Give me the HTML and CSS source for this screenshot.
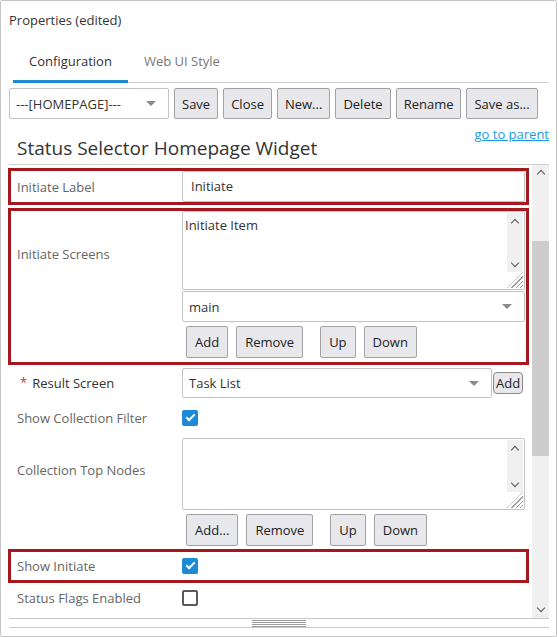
FILE: index.html
```html
<!doctype html>
<html>
  <head>
    <meta charset="utf-8">
    <title>Properties</title>
    <link rel="stylesheet" href="styles.css">
  </head>
  <body>
    <div class="panel">
      <div class="panel-title">Properties (edited)</div>
      <div class="tabs">
        <div class="tab active">Configuration</div>
        <div class="tab">Web UI Style</div>
      </div>
      <div class="toolbar">
        <div class="select page-select"><span>---[HOMEPAGE]---</span><i class="caret"></i></div>
        <button class="btn">Save</button>
        <button class="btn">Close</button>
        <button class="btn">New...</button>
        <button class="btn">Delete</button>
        <button class="btn">Rename</button>
        <button class="btn">Save as...</button>
      </div>
      <div class="heading">
        <a class="parent-link" href="#">go to parent</a>
        <h1>Status Selector Homepage Widget</h1>
      </div>
      <div class="content">
        <div class="fields">
          <div class="field flagged field-label">
            <label>Initiate Label</label>
            <div class="control"><div class="input">Initiate</div></div>
          </div>
          <div class="field flagged field-screens">
            <label>Initiate Screens</label>
            <div class="control">
              <div class="textarea tall">
                <div class="text">Initiate Item</div>
                <div class="mini-scroll">
                  <div class="mini-track"><i class="chev up"></i><i class="chev down"></i></div>
                  <div class="resize-grip"></div>
                </div>
              </div>
              <div class="select wide"><span>main</span><i class="caret"></i></div>
              <div class="btn-row">
                <button class="btn">Add</button>
                <button class="btn">Remove</button>
                <button class="btn spaced">Up</button>
                <button class="btn">Down</button>
              </div>
            </div>
          </div>
          <div class="field field-result">
            <label><span class="req">*</span>Result Screen</label>
            <div class="control inline">
              <div class="select result-select"><span>Task List</span><i class="caret"></i></div>
              <button class="btn btn-small">Add</button>
            </div>
          </div>
          <div class="field field-check">
            <label>Show Collection Filter</label>
            <div class="control"><span class="checkbox checked"></span></div>
          </div>
          <div class="field field-nodes">
            <label>Collection Top Nodes</label>
            <div class="control">
              <div class="textarea short">
                <div class="text"></div>
                <div class="mini-scroll">
                  <div class="mini-track"><i class="chev up"></i><i class="chev down"></i></div>
                  <div class="resize-grip"></div>
                </div>
              </div>
              <div class="btn-row">
                <button class="btn">Add...</button>
                <button class="btn">Remove</button>
                <button class="btn spaced">Up</button>
                <button class="btn">Down</button>
              </div>
            </div>
          </div>
          <div class="field flagged field-check">
            <label>Show Initiate</label>
            <div class="control"><span class="checkbox checked"></span></div>
          </div>
          <div class="field field-last">
            <label>Status Flags Enabled</label>
            <div class="control"><span class="checkbox"></span></div>
          </div>
        </div>
        <div class="vscroll">
          <i class="chev up"></i>
          <div class="vscroll-track"><div class="vscroll-thumb"></div></div>
          <i class="chev down"></i>
        </div>
      </div>
      <div class="panel-foot"><span class="foot-grip"></span></div>
    </div>
  </body>
</html>
```

FILE: styles.css
```css
body {
  background: white;
  color: #333;
  font: 13px/18px "Open Sans", "Noto Sans", sans-serif;
  margin: 0;
}
.panel {
  border: 1px solid #c4c4c4;
  border-radius: 2px;
  box-sizing: border-box;
  height: 637px;
  overflow: hidden;
  width: 557px;
}
.panel-title {
  padding: 10px 8px 0;
}
/* tabs */
.tabs {
  border-bottom: 1px solid #cfcfcf;
  display: flex;
  margin: 9px 8px 0 12px;
}
.tab {
  color: #777;
  margin-bottom: -1px;
  padding: 14px 16px 10px;
  border-bottom: 3px solid transparent;
}
.tab.active {
  border-bottom-color: #1f8ad2;
  color: #333;
}
/* toolbar */
.toolbar {
  display: flex;
  gap: 5px;
  margin: 5px 8px 0;
}
.btn {
  background: #e8e8ec;
  border: 1px solid #a3a3a3;
  border-radius: 2px;
  color: #222;
  font: inherit;
  height: 31px;
  margin: 0;
  padding: 0 7px;
  white-space: nowrap;
}
.select {
  align-items: center;
  background: white;
  border: 1px solid #c4c4c4;
  border-radius: 2px;
  box-sizing: border-box;
  display: flex;
  height: 31px;
  justify-content: space-between;
  padding: 0 12px 0 6px;
}
.caret {
  border-left: 5px solid transparent;
  border-right: 5px solid transparent;
  border-top: 5px solid #8a8a8a;
}
.page-select {
  flex: none;
  width: 160px;
}
/* heading */
.heading {
  border-bottom: 1px solid #cfcfcf;
  margin: 0 7px 0 8px;
  padding: 7px 0 4px;
}
.parent-link {
  color: #1a9ae0;
  float: right;
  line-height: 16px;
}
.heading h1 {
  font-size: 19px;
  font-weight: normal;
  line-height: 24px;
  margin: 0;
  padding: 10px 0 0 8px;
}
/* scrolling body */
.content {
  display: flex;
  height: 453px;
  margin: 0 7px 0 7px;
}
.fields {
  flex: 1;
  overflow: hidden;
  padding-top: 3px;
}
.field {
  align-items: center;
  border: 3px solid transparent;
  display: flex;
  margin-right: 3px;
  padding: 0 1px 0 6px;
}
.field.flagged {
  border-color: #a3191f;
}
.field label {
  align-items: center;
  align-self: stretch;
  color: #666;
  display: flex;
  flex: 0 0 165px;
}
.control {
  flex: 1;
}
.control.inline {
  align-items: center;
  display: flex;
}
.field-label {
  height: 31px;
}
.field-screens {
  margin-top: 3px;
}
.field-screens label {
  align-items: flex-start;
  padding-top: 34px;
}
.field-nodes label {
  align-items: flex-start;
  padding-top: 23px;
}
.field-result {
  height: 30px;
}
.field-check {
  height: 28px;
}
.field-last {
  height: 24px;
}
.field-screens .control {
  padding-bottom: 4px;
}
.req {
  color: #d0312d;
  margin: -3px 5px 0 3px;
}
.field-result label {
  color: #333;
}
.input {
  border: 1px solid #c4c4c4;
  border-radius: 2px;
  box-sizing: border-box;
  height: 31px;
  line-height: 29px;
  padding-left: 8px;
}
.textarea {
  border: 1px solid #c4c4c4;
  border-radius: 2px;
  box-sizing: border-box;
  display: flex;
}
.textarea.tall {
  height: 79px;
}
.textarea.short {
  height: 72px;
}
.textarea .text {
  flex: 1;
  padding: 4px 2px;
}
.mini-scroll {
  display: flex;
  flex-direction: column;
  margin: 1px 1px 1px 0;
  width: 16px;
}
.mini-track {
  align-items: center;
  background: #f0f0f0;
  display: flex;
  flex: 1;
  flex-direction: column;
  justify-content: space-between;
  padding: 7px 0 6px;
}
.resize-grip {
  background: repeating-linear-gradient(135deg, transparent 0 2px, #9a9a9a 2px 3px);
  clip-path: polygon(100% 0, 100% 100%, 0 100%);
  height: 16px;
}
.chev {
  border-left: 1.5px solid #555;
  border-top: 1.5px solid #555;
  display: block;
  height: 5px;
  width: 5px;
}
.chev.up {
  transform: rotate(45deg);
}
.chev.down {
  transform: rotate(225deg);
}
.select.wide {
  margin-top: 1px;
}
.select.result-select {
  height: 30px;
  width: 310px;
}
.btn-row {
  display: flex;
  gap: 8px;
  margin-top: 4px;
  padding-left: 4px;
}
.btn-row .btn {
  height: 32px;
  padding: 0 8px;
}
.btn-row .spaced {
  margin-left: 9px;
}
.btn-small {
  border-color: #8a8a8a;
  border-radius: 4px;
  height: 22px;
  line-height: 18px;
  margin-left: 1px;
  padding: 0 2px;
}
.checkbox {
  border: 2px solid #5a5a5a;
  border-radius: 2px;
  box-sizing: border-box;
  display: block;
  height: 16px;
  position: relative;
  width: 16px;
}
.checkbox.checked {
  background: #1e8ad6;
  border-color: #1e8ad6;
}
.checkbox.checked::after {
  border-bottom: 2px solid white;
  border-right: 2px solid white;
  content: "";
  height: 7px;
  left: 4px;
  position: absolute;
  top: 0;
  transform: rotate(45deg);
  width: 3px;
}
/* page scrollbar */
.vscroll {
  align-items: center;
  background: #f0f0f0;
  display: flex;
  flex: 0 0 17px;
  flex-direction: column;
  padding: 6px 0 7px;
}
.vscroll .chev {
  flex: none;
}
.vscroll-track {
  align-self: stretch;
  flex: 1;
  padding-top: 64px;
}
.vscroll-thumb {
  background: #cdcdcd;
  height: 215px;
}
.panel-foot {
  border-bottom: 1px solid #c8c8c8;
  border-top: 1px solid #c8c8c8;
  display: flex;
  height: 8px;
  justify-content: center;
  margin: 0 7px 0 8px;
}
.foot-grip {
  background: repeating-linear-gradient(#9d9d9d 0 1px, transparent 1px 2px);
  height: 8px;
  margin-top: 1px;
  width: 54px;
}
```
